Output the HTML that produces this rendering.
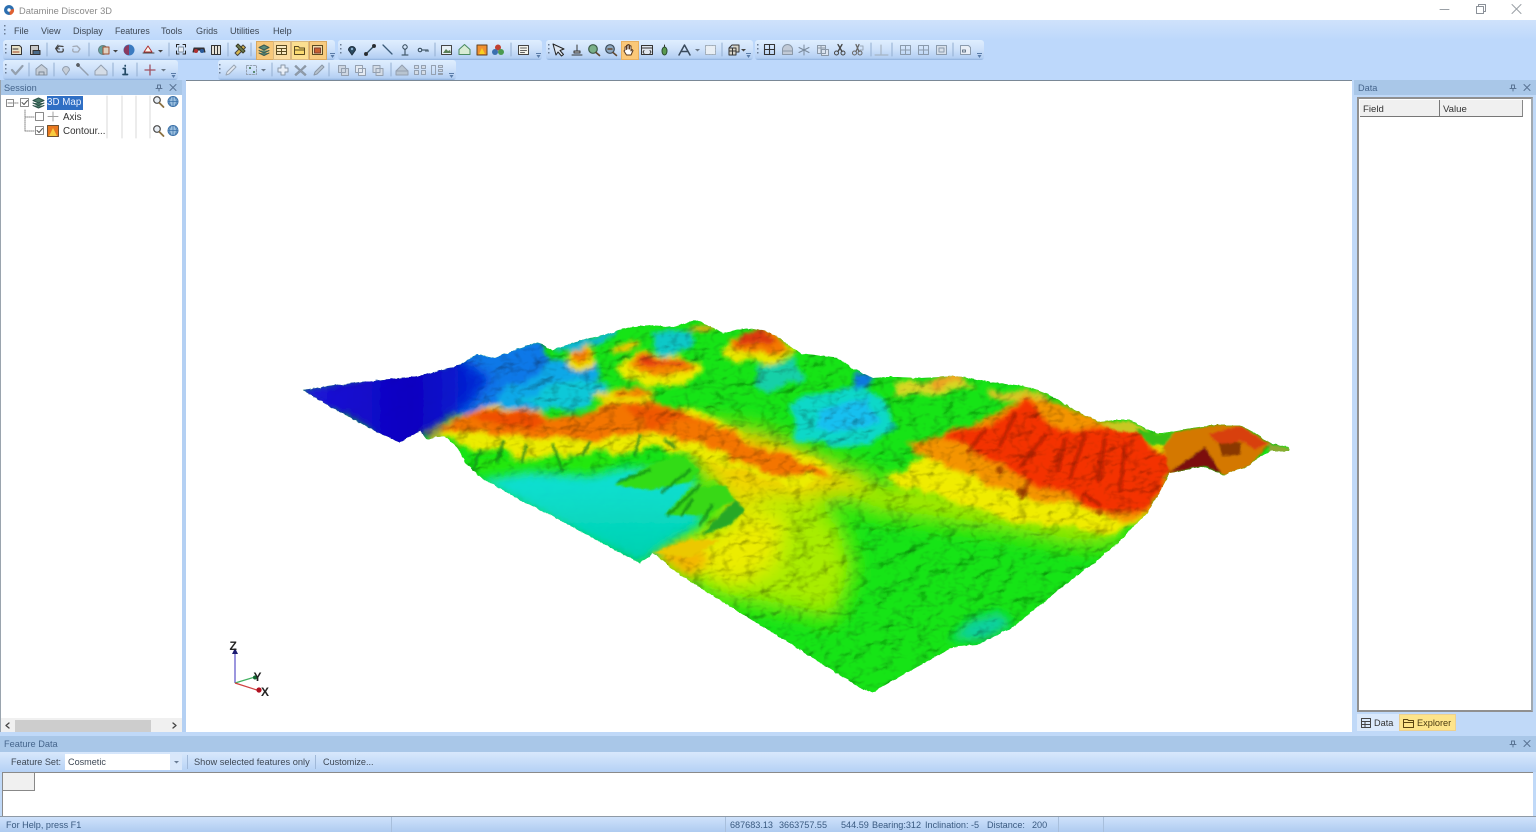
<!DOCTYPE html>
<html><head><meta charset="utf-8"><title>Datamine Discover 3D</title>
<style>
html,body{margin:0;padding:0;width:1536px;height:832px;overflow:hidden;background:#bdd8fb}
body{font-family:"Liberation Sans",sans-serif;font-size:9.1px;color:#3d4754;position:relative}
.a{position:absolute}
.t{position:absolute;white-space:nowrap;line-height:12px;margin-top:1px;filter:blur(.25px)}
.tb{position:absolute;height:20px;border-radius:3px;background:linear-gradient(#dfeefe,#cfe2fa 45%,#b3cff3 90%,#8fb0dc)}
.hd{position:absolute;background:#a9c7e8;height:16px}
</style></head><body>
<!-- title -->
<div class="a" style="left:0;top:0;width:1536px;height:20px;background:#fff"></div>
<div class="t" style="left:19px;top:4px;color:#8a8a8a;font-size:9.3px">Datamine Discover 3D</div>
<!-- menu -->
<div class="a" style="left:0;top:20px;width:1536px;height:20px;background:linear-gradient(#cfe2fb,#bdd8fb)"></div>
<div class="t" style="left:14px;top:24px">File</div>
<div class="t" style="left:41px;top:24px">View</div>
<div class="t" style="left:73px;top:24px">Display</div>
<div class="t" style="left:115px;top:24px;font-size:8.8px">Features</div>
<div class="t" style="left:161px;top:24px">Tools</div>
<div class="t" style="left:196px;top:24px">Grids</div>
<div class="t" style="left:230px;top:24px">Utilities</div>
<div class="t" style="left:273px;top:24px">Help</div>
<!-- toolbars -->
<div class="tb" style="left:3px;top:40px;width:332px"></div>
<div class="tb" style="left:338px;top:40px;width:204px"></div>
<div class="tb" style="left:546px;top:40px;width:207px"></div>
<div class="tb" style="left:755px;top:40px;width:229px"></div>
<div class="tb" style="left:3px;top:60px;width:175px"></div>
<div class="tb" style="left:218px;top:60px;width:238px"></div>
<!-- hot buttons -->
<div class="a" style="left:256px;top:41px;width:16px;height:17px;background:#f7c87a;border:1px solid #d8a860"></div>
<div class="a" style="left:273px;top:41px;width:16px;height:17px;background:#fbdca0;border:1px solid #d8b880"></div>
<div class="a" style="left:291px;top:41px;width:16px;height:17px;background:#fbdf90;border:1px solid #d8b880"></div>
<div class="a" style="left:309px;top:41px;width:16px;height:17px;background:#f7cc80;border:1px solid #d8a860"></div>
<div class="a" style="left:621px;top:41px;width:16px;height:17px;background:#fbc878;border:1px solid #e8b060"></div>
<!-- left panel -->
<div class="a" style="left:0;top:80px;width:182px;height:652px;background:#fff;border-left:1px solid #9aa4ae;box-sizing:border-box"></div>
<div class="hd" style="left:1px;top:80px;width:181px;height:15px"></div>
<div class="t" style="left:4px;top:81px;color:#45658c;font-size:9.2px">Session</div>
<div class="a" style="left:182px;top:80px;width:4px;height:652px;background:#b4d0f3"></div>
<div class="a" style="left:47px;top:96px;width:36px;height:14px;background:#2f6fc4"></div>
<div class="t" style="left:47px;top:96px;color:#e8f0ff;font-size:9.8px">3D Map</div>
<div class="t" style="left:63px;top:111px;font-size:9.8px;color:#333">Axis</div>
<div class="t" style="left:63px;top:125px;font-size:9.8px;color:#333">Contour...</div>
<div class="a" style="left:1px;top:718px;width:181px;height:14px;background:#f0f0f0"></div>
<div class="a" style="left:15px;top:720px;width:136px;height:12px;background:#cdcdcd"></div>
<!-- viewport -->
<div class="a" style="left:186px;top:80px;width:1166px;height:652px;background:#fff;border-top:1px solid #7a8896;box-sizing:border-box"></div>
<svg class="a" style="left:186px;top:81px" width="1166" height="651" viewBox="186 81 1166 651">
<defs>
<clipPath id="sil"><path d="M302 390L360 382 420 376 460 365 477 354 495 358 520 348 538 342 552 350 567 345 590 338 605 335 630 327 650 325 672 327 697 320 710 326 723 333 735 330 747 328 765 331 780 338 790 346 800 353 815 355 837 358 852 368 873 378 885 377 897 377 920 378 940 377 955 376 970 378 990 382 1013 385 1032 388 1050 395 1065 404 1080 413 1092 418 1100 422 1115 420 1130 420 1145 428 1157 433 1163 433 1185 429 1213 425 1240 425 1255 433 1270 443 1288 447 1290 451 1270 451 1258 458 1247 467 1235 470 1223 476 1212 470 1203 467 1185 470 1170 473 1158 495 1147 513 1130 530 1118 543 1095 562 1067 583 1040 605 1013 627 995 636 977 645 953 647 915 668 873 692 860 688 840 675 800 650 760 625 720 600 680 575 653 553 640 563 600 542 560 520 520 500 480 477 465 462 457 447 445 436 437 437 427 440 420 431 400 442 380 434 340 412Z"/></clipPath>
<filter id="rough" filterUnits="userSpaceOnUse" x="186" y="81" width="1166" height="651"><feTurbulence type="fractalNoise" baseFrequency=".18" numOctaves="2" seed="4"/><feDisplacementMap in="SourceGraphic" scale="3" xChannelSelector="R" yChannelSelector="G"/></filter>
<filter id="r" filterUnits="userSpaceOnUse" x="186" y="81" width="1166" height="651"><feTurbulence type="fractalNoise" baseFrequency=".035 .06" numOctaves="3" seed="7"/><feDisplacementMap in="SourceGraphic" scale="18" xChannelSelector="R" yChannelSelector="G"/><feGaussianBlur stdDeviation="2.5"/></filter>
<filter id="s" filterUnits="userSpaceOnUse" x="186" y="81" width="1166" height="651"><feGaussianBlur stdDeviation="5"/></filter>
<filter id="s8" filterUnits="userSpaceOnUse" x="186" y="81" width="1166" height="651"><feGaussianBlur stdDeviation="11"/></filter>
<filter id="s2" filterUnits="userSpaceOnUse" x="186" y="81" width="1166" height="651"><feGaussianBlur stdDeviation="1"/></filter>
<filter id="hs" filterUnits="userSpaceOnUse" x="186" y="81" width="1166" height="651"><feTurbulence type="fractalNoise" baseFrequency=".04 .07" numOctaves="3" seed="11"/><feDiffuseLighting surfaceScale="6" diffuseConstant="1.170" lighting-color="#fff"><feDistantLight azimuth="200" elevation="62"/></feDiffuseLighting><feGaussianBlur stdDeviation=".5"/></filter>
<linearGradient id="blue" x1="302" y1="0" x2="520" y2="0" gradientUnits="userSpaceOnUse"><stop offset="0" stop-color="#1e18d8"/><stop offset=".5" stop-color="#0c00c0"/><stop offset="1" stop-color="#0040e0"/></linearGradient>
<linearGradient id="cy" x1="0" y1="470" x2="0" y2="560" gradientUnits="userSpaceOnUse"><stop offset="0" stop-color="#10e0dc"/><stop offset="1" stop-color="#00d0b4"/></linearGradient>
</defs>
<g filter="url(#rough)"><g clip-path="url(#sil)">
<rect x="290" y="310" width="1010" height="390" fill="#14e414"/>
<!-- lower left/foreground -->
<g filter="url(#s8)">
<path d="M650 555L700 530 745 500 800 490 840 520 855 570 835 620 790 610 720 598Z" fill="#a8ec00"/>
<path d="M655 553L700 535 745 510 785 515 775 565 735 585 690 572Z" fill="#ecec00"/>
<path d="M690 420L760 430 840 465 880 480 840 500 770 495 730 510 690 460Z" fill="#f0d800"/>
<path d="M700 430L770 445 830 475 790 480 730 465Z" fill="#f4b400"/>
<path d="M840 495L900 480 1000 495 1120 522 1118 543 1080 545 1000 530 930 520 870 512Z" fill="#a8e800"/>
</g>
<g filter="url(#s)">
<path d="M652 553L690 540 710 560 690 578Z" fill="#f4b800"/>
<path d="M950 640L985 640 1012 625 1000 612 970 620Z" fill="#10d0a0"/>
</g>
<g filter="url(#r)">
<!-- back -->
<path d="M470 352L540 340 552 362 530 390 490 412 445 410 455 375Z" fill="#0878e8"/>
<path d="M500 392L555 360 590 352 600 372 580 395 540 412 500 415Z" fill="#10a8e8"/>
<path d="M520 400L580 375 610 385 590 405 540 412Z" fill="#10c8d8"/>
<path d="M652 332L690 330 695 345 670 355 650 348Z" fill="#10c8c8"/>
<path d="M555 345L620 330 600 345 575 352Z" fill="#10b8d0"/>
<path d="M755 368L795 360 805 382 770 392 752 385Z" fill="#18d0a8"/>
<path d="M790 400L860 385 890 405 895 430 850 445 795 440Z" fill="#10d8c8"/>
<path d="M820 408L868 398 878 420 845 432 818 428Z" fill="#14c0f0"/>
<path d="M855 375L875 378 872 388 852 388Z" fill="#0c78e0"/>
<!-- peaks -->
<ellipse cx="660" cy="370" rx="42" ry="17" fill="#ecec00"/>
<ellipse cx="662" cy="366" rx="34" ry="11" fill="#f48800"/>
<ellipse cx="662" cy="362" rx="26" ry="5" fill="#e84010"/>
<ellipse cx="580" cy="360" rx="15" ry="10" fill="#ecdc00"/>
<ellipse cx="580" cy="356" rx="9" ry="5" fill="#f48000"/>
<ellipse cx="625" cy="396" rx="28" ry="9" fill="#ecd800"/>
<ellipse cx="632" cy="393" rx="18" ry="5" fill="#f48800"/>
<ellipse cx="625" cy="346" rx="12" ry="6" fill="#ecc800"/>
<ellipse cx="700" cy="326" rx="13" ry="5" fill="#e8b010"/>
<ellipse cx="760" cy="348" rx="36" ry="17" fill="#e8e800"/>
<ellipse cx="760" cy="343" rx="30" ry="12" fill="#f47800"/>
<ellipse cx="757" cy="338" rx="21" ry="6" fill="#dc3808"/>
<path d="M895 382L960 376 975 390 930 394 895 392Z" fill="#d8d820"/>
<path d="M925 378L965 378 965 385 930 385Z" fill="#ecA420"/>
<path d="M990 388L1050 395 1045 408 1000 402Z" fill="#d8c820"/>
<!-- yellow under right red -->
<path d="M885 475L960 440 1040 410 1180 440 1150 515 1118 535 1060 525 1000 517 950 500 900 488Z" fill="#f0ec00"/>
<path d="M905 445L975 425 1030 395 1140 430 1180 467 1150 510 1125 525 1095 505 1040 500 990 487 950 468Z" fill="#f49400"/>
<path d="M945 436L1000 420 1027 396 1057 427 1137 430 1180 467 1160 490 1148 510 1120 515 1070 498 1030 482 985 455Z" fill="#f43000"/>
<!-- left ridge -->
<path d="M425 430L470 408 500 405 570 420 620 395 700 410 760 445 835 470 800 490 720 465 660 445 600 462 520 455 470 448Z" fill="#ecec00"/>
<path d="M432 432L455 420 470 408 505 408 560 418 620 402 665 403 705 420 770 450 830 478 780 475 700 445 655 432 610 440 540 440 480 432Z" fill="#f47400"/>
<path d="M470 414L510 410 550 420 530 428 480 424Z" fill="#f05000"/>
<path d="M625 408L665 405 695 420 650 425Z" fill="#f05800"/>
<path d="M470 458L560 456 610 446 620 470 560 488 490 484Z" fill="#20e810"/>
<path d="M635 465L680 458 700 480 650 500 610 490Z" fill="#30e410"/>
<path d="M665 490L715 478 728 500 690 520 650 505Z" fill="#60e410"/>
<path d="M300 390L460 365 470 384 440 420 400 445Z" fill="url(#blue)"/>
<path d="M425 432L440 426 436 440 428 442Z" fill="#b0c020"/>
</g>
</g>
<!-- hillshade -->
<g clip-path="url(#sil)" style="mix-blend-mode:multiply"><rect x="290" y="310" width="1010" height="390" filter="url(#hs)"/></g>
<g clip-path="url(#sil)">
<!-- flats over shading -->
<g filter="url(#s)">
<path d="M296 388L465 362 490 378 470 405 430 432 398 448Z" fill="url(#blue)" opacity=".95"/>
<path d="M478 480L530 472 590 476 625 468 690 470 700 510 700 525 665 545 640 565 560 525Z" fill="url(#cy)" opacity=".97"/>
</g>
<g filter="url(#s2)">
<!-- green spurs over cyan -->
<path d="M615 485L650 465 680 455 700 470 690 482 650 490Z" fill="#30dc18"/>
<path d="M665 515L690 488 725 485 735 500 705 515Z" fill="#38d818"/>
<path d="M702 535L715 520 735 500 745 510 730 525Z" fill="#28a828"/>
<path d="M652 553L690 540 720 540 690 558Z" fill="#ecc800"/>
<!-- dark spur streaks -->
<g stroke="#0a7a18" stroke-width="3" fill="none" opacity=".7" stroke-linecap="round">
<path d="M480 450L473 470M503 442L497 462M526 446L522 462M553 445L562 470M590 442L583 455M640 435L635 455M665 440L675 447M618 482L650 470M662 492L690 470M668 515L700 485M692 500L682 515M712 505L700 525"/>
</g>
<!-- dark red streaks -->
<g stroke="#8c1000" stroke-width="4" fill="none" opacity=".5" stroke-linecap="round">
<path d="M1045 435L1022 465M1065 440L1058 470M1085 435L1070 478M1105 440L1098 480M1125 445L1120 490M985 430L968 452M1015 415L1000 445M1030 480L1022 498M1100 505L1085 495"/>
</g>
<circle cx="1020" cy="492" r="4" fill="#7a2000" opacity=".6"/><circle cx="1000" cy="470" r="4" fill="#7a2000" opacity=".6"/><circle cx="1100" cy="513" r="3" fill="#7a2000" opacity=".6"/>
<!-- right tail -->
<path d="M1160 434L1215 425 1240 425 1270 443 1250 466 1224 476 1205 466 1170 473Z" fill="#d47800"/>
<path d="M1208 434L1240 426 1268 443 1255 450 1240 440 1225 450Z" fill="#d84010"/>
<path d="M1218 444L1242 442 1240 455 1222 456Z" fill="#8a3800"/>
<path d="M1168 473L1205 447 1222 475 1205 466Z" fill="#7c1008"/>
<path d="M1100 424L1130 421 1150 432 1120 432Z" fill="#c8c820"/>
<path d="M1135 428L1158 434 1175 432 1165 445 1150 445Z" fill="#38c018"/>
<path d="M1268 444L1290 448 1290 452 1268 452Z" fill="#8ea830"/>
</g>
</g></g>
<!-- axis -->
<g fill="none" stroke-width="1.2"><path d="M235 683V652" stroke="#5a50c8"/><path d="M235 683L255 677" stroke="#40b060"/><path d="M235 683L260 691" stroke="#d04040"/></g>
<path d="M232 654L235 648 238 654Z" fill="#1a1a70"/><circle cx="255" cy="677.500" r="2" fill="#106830"/><circle cx="259" cy="690" r="2.600" fill="#b01020"/>
<text x="229.500" y="650" font-family="Liberation Sans" font-size="12" font-weight="bold" fill="#222">Z</text>
<text x="253.500" y="681" font-family="Liberation Sans" font-size="12" font-weight="bold" fill="#222">Y</text>
<text x="261" y="696" font-family="Liberation Sans" font-size="12" font-weight="bold" fill="#222">X</text>
</svg>
<!-- right panel -->
<div class="a" style="left:1352px;top:80px;width:184px;height:652px;background:#c0d9f8"></div>
<div class="hd" style="left:1354px;top:80px;width:182px;height:15px"></div>
<div class="t" style="left:1358px;top:81px;color:#45658c;font-size:9.2px">Data</div>
<div class="a" style="left:1357px;top:97px;width:176px;height:615px;background:#fff;border:2px solid #8a8a8a;border-color:#909090 #a0a8b0 #909090 #909090;box-sizing:border-box"></div>
<div class="a" style="left:1360px;top:100px;width:163px;height:17px;background:#f0f0f0;border-bottom:1px solid #777;border-right:1px solid #888;box-sizing:border-box"></div>
<div class="a" style="left:1439px;top:100px;width:1px;height:17px;background:#777"></div>
<div class="t" style="left:1363px;top:103px;font-size:9.6px;color:#333">Field</div>
<div class="t" style="left:1443px;top:103px;font-size:9.6px;color:#333">Value</div>
<div class="a" style="left:1357px;top:714px;width:42px;height:17px;background:#dbe9fb"></div>
<div class="a" style="left:1399px;top:714px;width:57px;height:17px;background:#fde48a;border:1px solid #ecd090;box-sizing:border-box"></div>
<div class="t" style="left:1374px;top:716px;color:#333;font-size:9.2px">Data</div>
<div class="t" style="left:1417px;top:716px;color:#4a3a10;font-size:9.2px">Explorer</div>
<!-- bottom -->
<div class="a" style="left:0;top:732px;width:1536px;height:100px;background:#c0d9f8"></div>
<div class="hd" style="left:0;top:736px;width:1536px;height:16px"></div>
<div class="t" style="left:4px;top:737px;color:#45658c;font-size:9.2px">Feature Data</div>
<div class="a" style="left:0;top:752px;width:1536px;height:20px;background:linear-gradient(#d8e8fc,#b5d1f5)"></div>
<div class="t" style="left:11px;top:755px">Feature Set:</div>
<div class="a" style="left:65px;top:754px;width:117px;height:16px;background:#fff"></div>
<div class="a" style="left:170px;top:754px;width:12px;height:16px;background:#d9e7fa"></div>
<div class="t" style="left:68px;top:755px">Cosmetic</div>
<div class="t" style="left:194px;top:755px;font-size:9.25px">Show selected features only</div>
<div class="t" style="left:323px;top:755px">Customize...</div>
<div class="a" style="left:187px;top:755px;width:1px;height:14px;background:#a0b8d8"></div>
<div class="a" style="left:315px;top:755px;width:1px;height:14px;background:#a0b8d8"></div>
<div class="a" style="left:2px;top:772px;width:1531px;height:44px;background:#fff;border-top:1px solid #8a8a8a;border-left:1px solid #8a8a8a;box-sizing:border-box"></div>
<div class="a" style="left:3px;top:773px;width:32px;height:18px;background:#f0f0f0;border-right:1px solid #888;border-bottom:1px solid #888;box-sizing:border-box"></div>
<!-- status -->
<div class="a" style="left:0;top:816px;width:1536px;height:16px;background:linear-gradient(#cfe2fb,#aecbf0);border-top:1px solid #8f9aa6;box-sizing:border-box"></div>
<div class="t" style="left:6px;top:818px;color:#3a5a80">For Help, press F1</div>
<div class="t" style="left:730px;top:818px;color:#3a5a80">687683.13</div>
<div class="t" style="left:779px;top:818px;color:#3a5a80">3663757.55</div>
<div class="t" style="left:841px;top:818px;color:#3a5a80">544.59</div>
<div class="t" style="left:872px;top:818px;color:#3a5a80">Bearing:312</div>
<div class="t" style="left:925px;top:818px;color:#3a5a80">Inclination: -5</div>
<div class="t" style="left:987px;top:818px;color:#3a5a80">Distance:</div>
<div class="t" style="left:1032px;top:818px;color:#3a5a80">200</div>
<div class="a" style="left:391px;top:817px;width:1px;height:15px;background:#a8bfdc"></div>
<div class="a" style="left:725px;top:817px;width:1px;height:15px;background:#a8bfdc"></div>
<div class="a" style="left:1058px;top:817px;width:1px;height:15px;background:#a8bfdc"></div>
<div class="a" style="left:1103px;top:817px;width:1px;height:15px;background:#a8bfdc"></div>
<!-- icons overlay -->
<svg class="a" style="left:0;top:0;pointer-events:none" width="1536" height="832" viewBox="0 0 1536 832" fill="none" stroke-linecap="round" stroke-linejoin="round">
<!-- app icon -->
<circle cx="9" cy="10" r="5" fill="#2c6fb0"/><path d="M9 10L14 9A5 5 0 0 1 10 15Z" fill="#e06030"/><circle cx="9" cy="10" r="1.700" fill="#fff"/>
<!-- window controls -->
<path d="M1440 9.500H1449" stroke="#9aa0a6"/><path d="M1476.500 6.500h7v7h-7zM1478.500 6.500v-2h7v7h-2" stroke="#8a9098"/><path d="M1512 4.500l9 9M1521 4.500l-9 9" stroke="#9aa0a6"/>
<!-- grips -->
<g fill="#6a7c94"><rect x="5" y="44" width="1.500" height="1.500"/><rect x="5" y="48" width="1.500" height="1.500"/><rect x="5" y="52" width="1.500" height="1.500"/><rect x="5" y="64" width="1.500" height="1.500"/><rect x="5" y="68" width="1.500" height="1.500"/><rect x="5" y="72" width="1.500" height="1.500"/><rect x="340" y="44" width="1.500" height="1.500"/><rect x="340" y="48" width="1.500" height="1.500"/><rect x="340" y="52" width="1.500" height="1.500"/><rect x="548" y="44" width="1.500" height="1.500"/><rect x="548" y="48" width="1.500" height="1.500"/><rect x="548" y="52" width="1.500" height="1.500"/><rect x="757" y="44" width="1.500" height="1.500"/><rect x="757" y="48" width="1.500" height="1.500"/><rect x="757" y="52" width="1.500" height="1.500"/><rect x="219" y="64" width="1.500" height="1.500"/><rect x="219" y="68" width="1.500" height="1.500"/><rect x="219" y="72" width="1.500" height="1.500"/><rect x="4" y="25" width="1.500" height="1.500"/><rect x="4" y="29" width="1.500" height="1.500"/><rect x="4" y="33" width="1.500" height="1.500"/></g>
<!-- separators row 1 -->
<g stroke="#93aed0"><path d="M47 43v13M89 43v13M169 43v13M228 43v13M251 43v13M435 43v13M511 43v13M722 43v13M892 43v13M953 43v13M871 43v13M29 63v13M54 63v13M113 63v13M137 63v13M272 63v13M329 63v13M391 63v13"/></g>
<!-- overflow arrows -->
<g fill="#5a7ca8"><path d="M330 53h5v1h-5zM330.500 55h4l-2 3zM536 53h5v1h-5zM536.500 55h4l-2 3zM746 53h5v1h-5zM746.500 55h4l-2 3zM977 53h5v1h-5zM977.500 55h4l-2 3zM171 73h5v1h-5zM171.500 75h4l-2 3zM449 73h5v1h-5zM449.500 75h4l-2 3z"/></g>
<g stroke="#333"><!-- row1 -->
<path d="M11.500 45.500h8l2 2v7h-10zM13 49h5" fill="#e8e2c8"/><path d="M13 52h6" stroke="#a04020"/>
<path d="M30.500 45.500h8v9h-8z" fill="#c8c8c8"/><path d="M33 50.500h7v4h-7z" fill="#4a6a88"/>
<path d="M63 46.500l-4-.5-3 3 2 3h4a2 2 0 0 0 1-3" stroke="#444" stroke-width="1.300"/><path d="M58 45l-2.500 3.500 4 .5" stroke="#444"/>
<path d="M73 46.500l4-.5 3 3-2 3h-4a2 2 0 0 1-1-3" stroke="#a0a8b4" stroke-width="1.300"/>
<circle cx="103" cy="50" r="4.500" fill="#60a0a0" stroke="#608080"/><path d="M103 47h6v7h-6z" fill="#e0d0c0" stroke="#a05030"/>
<path d="M113 50h5l-2.500 2.500z" fill="#444" stroke="none"/>
<circle cx="129" cy="50" r="5.500" fill="#3a7ac0" stroke="none"/><path d="M124 52a5.500 5.500 0 0 1 5-7v10a5.500 5.500 0 0 1-5-3z" fill="#8a3a60" stroke="none"/>
<path d="M144 52l4-6 4 6z" fill="#f8f8f0" stroke="#b03030"/><path d="M143 53h11" stroke="#444"/>
<path d="M158 50h5l-2.500 2.500z" fill="#444" stroke="none"/>
<path d="M176.500 47v-2.500h2.500M183 44.500h2.500V47M185.500 51v3h-2.500M179 54h-2.500v-3" stroke="#222"/><path d="M178.500 47h5v5h-5z" fill="#e8eef6" stroke="#8090a0"/>
<path d="M194 48h10l1 4h-4l-1-2h-2l-1 2h-4z" fill="#302c38"/><circle cx="196" cy="51" r="2" fill="#b03030" stroke="none"/><circle cx="202" cy="51" r="2" fill="#2a5a9a" stroke="none"/>
<path d="M211.500 45.500h9v9h-9zM214.500 45.500v9M217.500 45.500v9" fill="#e8e4d8" stroke="#333"/>
<path d="M235 53l8-8 2.500 2.500-8 8z" fill="#d8b850" stroke="#444"/><path d="M236 46l2-2 7 7-2 2z" fill="#6a7a50" stroke="#3a3a20"/>
<path d="M259 47.500l5-2.500 5 2.500-5 2.500zM259 50.500l5 2.500 5-2.500M259 53l5 2.500 5-2.500" fill="#5c8a78" stroke="#3a5a50"/>
<path d="M276.500 45.500h10v9h-10zM276.500 48.500h10M276.500 51.500h10M281.500 48.500v6" stroke="#5a4a20" fill="#f8e8c0"/>
<path d="M294.500 46.500h4l1 1.500h5v6.500h-10z" fill="#fbdc70" stroke="#5a4a20"/><path d="M294.500 50h10" stroke="#5a4a20"/>
<path d="M312.500 45.500h10v9h-10z" fill="#f0d8a8" stroke="#5a4a20"/><path d="M314.500 48h6v5h-6z" fill="#c86030" stroke="#804030"/>
<path d="M352 55l-3.500-5a3.500 3.500 0 1 1 7 0z" fill="#2a4a60" stroke="#203040"/><circle cx="352" cy="49" r="1.200" fill="#90b0d0" stroke="none"/>
<path d="M366 54l8-8" stroke="#2a4a60" stroke-width="1.300"/><circle cx="366" cy="54" r="1.500" fill="#1a2a38"/><circle cx="374" cy="46" r="1.500" fill="#1a2a38"/>
<path d="M383 45l9 9" stroke="#3a5a78" stroke-width="1.300"/>
<circle cx="405" cy="47" r="2.200" stroke="#2a4050"/><path d="M405 49v5M402 55h6" stroke="#2a4050"/>
<circle cx="420" cy="50" r="1.800" stroke="#2a4050"/><path d="M422 50h6M428 50v1.500M426 50v1.500" stroke="#2a4050"/>
<path d="M441.500 45.500h10v9h-10z" fill="#e8f0f4" stroke="#444"/><path d="M443 53l3-4 2 2 2-1 1 3z" fill="#5a8058" stroke="none"/>
<path d="M459 54.500v-5l5.500-5 5.500 5v5z" fill="#d8ecd4" stroke="#4a8a60"/>
<path d="M477 45h10v10h-10z" fill="#f09030" stroke="#604020"/><path d="M479 54l3-6 3 6z" fill="#f8d020" stroke="none"/>
<circle cx="498" cy="47.500" r="3" fill="#c04030" stroke="none"/><circle cx="495" cy="52" r="3" fill="#3a70b0" stroke="none"/><circle cx="501" cy="52" r="3" fill="#4a9a50" stroke="none"/>
<path d="M518.500 45.500h10v9h-10z" fill="#f4f4ec" stroke="#444"/><path d="M520.500 48h6M520.500 50.500h6M520.500 52.500h4" stroke="#606060"/>
<path d="M553 44l11 5-4 1.500 3.500 4-2 1.500-3.500-4-2 3z" fill="#dfe8f2" stroke="#222"/>
<path d="M577 45v6M574 51h6v2h-6zM572 55h10" stroke="#333" fill="#c8ccd0"/>
<circle cx="593" cy="49" r="4.300" fill="#7ab088" stroke="#3a5a48" stroke-width="1.200"/><path d="M596 52.500l3.500 3" stroke="#604830" stroke-width="1.700"/>
<circle cx="610" cy="49" r="4.300" fill="#8ea8c0" stroke="#3a4a58" stroke-width="1.200"/><path d="M613 52.500l3.500 3M608 49h4" stroke="#604830" stroke-width="1.500"/>
<path d="M625 50v-3l1.500-.5v3-4l1.500-.5v4-4.500l1.500.5v4-3.500l1.500.5v5l1 -1.500 1 1-2 4.500h-4.500l-2.500-4z" fill="#fff" stroke="#5a3a20"/>
<path d="M641.500 45.500h11v9h-11z" fill="#e0e6ee" stroke="#333"/><path d="M641.500 48h11M644 50.500l-1 1.500 1 1.500M650 50.500l1 1.500-1 1.500" stroke="#333"/>
<path d="M664.500 45v2" stroke="#333"/><ellipse cx="664.500" cy="51" rx="2.500" ry="4" fill="#5a9a50" stroke="#2a4a30"/>
<path d="M679 55l5.500-10 5.500 10M681 51.500h7" stroke="#3a4a5c" stroke-width="1.500"/><path d="M695 49h5l-2.500 2.500z" fill="#6a7888" stroke="none"/>
<path d="M705.500 45.500h10v9h-10z" fill="#e8eef4" stroke="#a0acb8" stroke-dasharray="2 1"/>
<path d="M729 48h7v7h-7zM732 45h7v7h-3M729 48l3-3" stroke="#333" fill="#d8d4c8"/><path d="M729 51h7M732.500 48v7" stroke="#333"/><path d="M741 49h5l-2.500 2.500z" fill="#444" stroke="none"/>
<path d="M764.500 44.500h10v10h-10zM764.500 49.500h10M769.500 44.500v10" stroke="#333" stroke-width="1.100"/>
<path d="M782.500 54.500v-5a5 5 0 0 1 10 0v5zM782.500 51h10" fill="#c2cad6" stroke="#8a98a8"/>
<path d="M804 45v10M799 47.500l10 5M809 47.500l-10 5" stroke="#7a8a9c"/>
<path d="M817.500 45.500h8v8h-8zM821.500 49.500h7v6h-7zM817.500 48h8M821 45.500v8" stroke="#8a98a8" fill="#dbe4f0"/>
<circle cx="836.500" cy="53" r="2" stroke="#444"/><circle cx="843" cy="53" r="2" stroke="#444"/><path d="M838 51.500l4-7M842 51.500l-4-7" stroke="#444" stroke-width="1.300"/>
<circle cx="854.500" cy="53" r="2" stroke="#666"/><circle cx="860" cy="53" r="2" stroke="#666"/><path d="M856 51.500l3-7M859 51.500l-3-7" stroke="#666" stroke-width="1.300"/><path d="M860 46h3v4h-3" stroke="#9aa8b8"/>
<path d="M881 45v9M875 55h13" stroke="#a0acb8"/>
<path d="M900.500 45.500h10v9h-10zM900.500 50h10M905.500 45.500v9" stroke="#8a9aac"/>
<path d="M918.500 45.500h10v9h-10zM918.500 50h10M923.500 45.500v9" stroke="#8a9aac"/>
<path d="M936.500 45.500h10v9h-10zM939 48h5v4h-5z" stroke="#8a9aac" fill="#d8e0ea"/>
<path d="M960.500 45.500h8l2 2v7h-10z" stroke="#8a9aac" fill="#e8eef6"/><path d="M962.500 50h3v2h-3z" stroke="#6a7a8c"/>
<!-- row2 -->
<path d="M12 70l3.500 4 7-8" stroke="#94a0ae" stroke-width="2.200"/>
<path d="M36 75v-6l5.500-4.500L47 69v6z" fill="#c6ced8" stroke="#8a96a4"/><path d="M39 75v-3h5v3" stroke="#7a8694"/>
<path d="M66 75l-3.500-5a3.500 3.500 0 1 1 7 0z" fill="#c6ced8" stroke="#94a0b0"/>
<path d="M78 65l10 10" stroke="#94a0b0" stroke-width="1.500"/><circle cx="78" cy="65" r="1.200" fill="#94a0b0"/>
<path d="M95 75v-4l6-6 6 6v4z" fill="#d4dce6" stroke="#94a0b0"/>
<path d="M123 74.500h4.500M125.200 74.500v-6h-2M125.200 65.500v.5" stroke="#244a66" stroke-width="1.700"/>
<path d="M150 65v10M145 70h10" stroke="#a05060" stroke-width="1.300"/><path d="M161 69h5l-2.500 2.500z" fill="#6a7888" stroke="none"/>
<path d="M226 75l1-3 7-7 2 2-7 7z" fill="#e4eaf2" stroke="#9aa6b4"/>
<path d="M246.500 65.500h10v9h-10z" stroke="#94a0b0" stroke-dasharray="2 1.500"/><rect x="249" y="67" width="2" height="2" fill="#5a8a70" stroke="none"/><rect x="253" y="71" width="2" height="2" fill="#5a8a70" stroke="none"/><path d="M261 69h5l-2.500 2.500z" fill="#6a7888" stroke="none"/>
<path d="M281 65h4v3h3v4h-3v3h-4v-3h-3v-4h3z" fill="#e8eef6" stroke="#8a98a8"/>
<path d="M296 65.500l4.500 4.500 4.500-4.500 1 1-4.500 4 4.500 4-1 1-4.500-4-4.500 4-1-1 4.500-4-4.500-4z" fill="#9aa6b4" stroke="#8a96a4"/>
<path d="M314 75l1-3 7-7 2 2-7 7z" fill="#b8c4d0" stroke="#8a96a4"/>
<path d="M338.500 65.500h7v7h-7zM341.500 68.500h7v7h-7z" stroke="#94a0b0" fill="#cdd6e2"/>
<path d="M355.500 65.500h7v7h-7zM358.500 68.500h7v7h-7z" stroke="#94a0b0" fill="#e4eaf2"/>
<path d="M373 65.500h7v7h-7zM376 68.500h7v7h-7z" stroke="#94a0b0" fill="#d4dce6"/>
<path d="M396 75v-4l6-6 6 6v4z" fill="#b8c4d0" stroke="#94a0b0"/><path d="M396 71h12" stroke="#94a0b0"/>
<path d="M414.500 65.500h4v3h-4zM414.500 70.500h4v4h-4zM421.500 65.500h4v3h-4zM421.500 70.500h4v4h-4z" stroke="#94a0b0" fill="#d4dce6"/>
<path d="M431.500 65.500h4v9h-4z" stroke="#94a0b0"/><path d="M438.500 65.500h4v2h-4zM438.500 69.500h4v2h-4zM438.500 73.500h4v1h-4z" stroke="#94a0b0" fill="#d4dce6"/>
<!-- panel pin/close -->
<path d="M157.500 85v3.500h3V85zM156 88.500h6M159 88.500v2.500" stroke="#5a7494"/><path d="M170 84.500l6 6M176 84.500l-6 6" stroke="#5a7494"/>
<path d="M1511.500 85v3.500h3V85zM1510 88.500h6M1513 88.500v2.500" stroke="#5a7494"/><path d="M1524 84.500l6 6M1530 84.500l-6 6" stroke="#5a7494"/>
<path d="M1511.500 741v3.500h3V741zM1510 744.500h6M1513 744.500v2.500" stroke="#5a7494"/><path d="M1524 740.500l6 6M1530 740.500l-6 6" stroke="#5a7494"/>
<!-- tree -->
<path d="M6.500 99.500h7v7h-7zM8 103h4" stroke="#8a8a8a"/>
<path d="M13 103h6M25 110v21M25 117h9M25 131h9" stroke="#888" stroke-dasharray="1 1"/>
<rect x="20.500" y="98.500" width="8" height="8" fill="#fff" stroke="#8a8a8a"/><path d="M22 102.500l2 2 3.500-4" stroke="#555"/>
<path d="M33 100.500l5.500-2.500 5.500 2.500-5.500 2.500zM33 103l5.500 2.500 5.500-2.500M33 105.500l5.500 2.500 5.500-2.500" fill="#4a7a68" stroke="#2a5048"/>
<rect x="35.500" y="112.500" width="8" height="8" fill="#fff" stroke="#8a8a8a"/>
<path d="M53 112v9M48 116.500h10" stroke="#a0a0a0"/>
<rect x="35.500" y="126.500" width="8" height="8" fill="#fff" stroke="#8a8a8a"/><path d="M37 130.500l2 2 3.500-4" stroke="#555"/>
<rect x="47.500" y="125.500" width="11" height="11" fill="#e87820" stroke="#705030"/><path d="M49 136l4-8 4 8z" fill="#f8cc40" stroke="none"/>
<g stroke="#d8d8d8"><path d="M107 96v42M122 96v42M136 96v42M150 96v42"/></g>
<circle cx="157" cy="100" r="3.300" fill="#e8eef4" stroke="#4a4a4a" stroke-width="1.200"/><path d="M159.500 103l4 4" stroke="#8a7040" stroke-width="1.800"/>
<circle cx="157" cy="129" r="3.300" fill="#e8eef4" stroke="#4a4a4a" stroke-width="1.200"/><path d="M159.500 132l4 4" stroke="#8a7040" stroke-width="1.800"/>
<circle cx="173" cy="101.500" r="5" fill="#9cc0e0" stroke="#3a70a8"/><path d="M168 101.500h10M173 96.500v10M170.500 98a8 8 0 0 0 0 7M175.500 98a8 8 0 0 1 0 7" stroke="#3a70a8" stroke-width=".7"/>
<circle cx="173" cy="130.500" r="5" fill="#9cc0e0" stroke="#3a70a8"/><path d="M168 130.500h10M173 125.500v10M170.500 127a8 8 0 0 0 0 7M175.500 127a8 8 0 0 1 0 7" stroke="#3a70a8" stroke-width=".7"/>
<!-- scroll arrows -->
<path d="M9 723l-3 2.500 3 2.500M173 723l3 2.500-3 2.500" stroke="#444" stroke-width="1.300"/>
<!-- combo arrow -->
<path d="M174 761h5l-2.500 2.500z" fill="#6a7c94" stroke="none"/>
<!-- tab icons -->
<path d="M1361.500 718.500h9v9h-9zM1361.500 721.500h9M1361.500 724.500h9M1365 721.500v6" stroke="#444"/>
<path d="M1403.500 719.500h4l1 1h5v7h-10zM1403.500 722.500h10" stroke="#5a4410"/>
</g>
</svg>
</body></html>
